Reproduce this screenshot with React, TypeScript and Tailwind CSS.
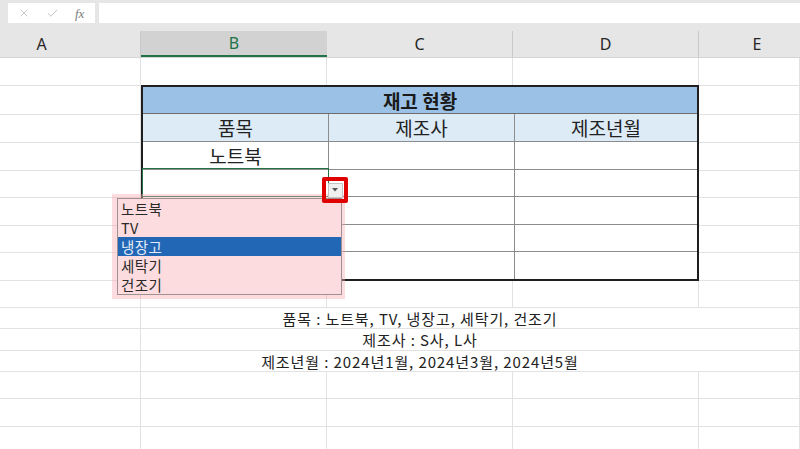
import { X, Check } from 'lucide-react';

const KR = "font-['Noto_Sans_CJK_KR','Noto_Sans',sans-serif]";

const ITEMS = ['노트북', 'TV', '냉장고', '세탁기', '건조기'];

/* plain grid cell with light gridlines */
function Cell({ className = '' }: { className?: string }) {
  return <div className={`border-r border-b border-[#e2e2e2] ${className}`} />;
}

function FormulaBar() {
  return (
    <div className="h-[31px] bg-[#e6e6e6] flex items-start pt-[3px] pl-[8px] gap-[4px]">
      <div className="w-[87px] h-[20px] bg-white flex items-center pl-[10px] gap-[16px]">
        <X size={12} strokeWidth={1.5} className="text-[#b4b4b4]" />
        <Check size={13} strokeWidth={1.5} className="text-[#b4b4b4]" />
        <span className="font-['Liberation_Serif',serif] italic text-[13px] text-[#7a7a7a] leading-none">
          fx
        </span>
      </div>
      <div className="flex-1 h-[20px] bg-white" />
    </div>
  );
}

function ColumnHeaders() {
  const base = 'border-r border-[#c9c9c9] flex items-center justify-center text-[#262626]';
  const letter = "font-['Noto_Sans',sans-serif] text-[16px] leading-none";
  return (
    <div className="h-[27px] bg-[#e6e6e6] grid grid-cols-[141px_186px_186px_186px_101px] border-b border-[#d4d4d4]">
      <div className={`${base} pr-[57px]`}>
        <span className={letter}>A</span>
      </div>
      <div className="bg-[#d2d2d2] border-b-2 border-[#217346] flex items-center justify-center text-[#217346]">
        <span className={letter}>B</span>
      </div>
      <div className={base}>
        <span className={letter}>C</span>
      </div>
      <div className={base}>
        <span className={letter}>D</span>
      </div>
      <div className={`${base} border-r-0 pl-[15px]`}>
        <span className={letter}>E</span>
      </div>
    </div>
  );
}

function StockTable() {
  const td = 'border-r border-b border-[#8c8c8c] flex items-center justify-center';
  return (
    <div className="col-start-2 col-span-3 row-start-2 row-span-7 border-2 border-[#1f1f1f] grid grid-cols-[186px_186px_1fr] grid-rows-[27px_28px_28px_27px_28px_27px_1fr] -mt-px">
      {/* title row */}
      <div className="col-span-3 bg-[#9bc2e6] border-b border-[#6d6d6d] flex items-center justify-center">
        <span className="text-[19px] font-bold text-[#1a1a1a] leading-none">재고 현황</span>
      </div>
      {/* sub headers */}
      {['품목', '제조사', '제조년월'].map((h, i) => (
        <div key={h} className={`${td} bg-[#ddebf7] ${i === 2 ? 'border-r-0' : ''}`}>
          <span className="text-[19px] text-[#222] leading-none">{h}</span>
        </div>
      ))}
      {/* data rows */}
      {[0, 1, 2, 3, 4].map((r) => (
        <>
          <div key={`b${r}`} className={`${td} ${r === 4 ? 'border-b-0' : ''} ${r === 1 ? 'relative' : ''}`}>
            {r === 0 && <span className="text-[19px] text-[#222] leading-none">노트북</span>}
            {r === 1 && (
              <div className="absolute -left-px -top-[2px] -right-px -bottom-px border-[1.5px] border-[#217346]" />
            )}
          </div>
          <div key={`c${r}`} className={`${td} ${r === 4 ? 'border-b-0' : ''}`} />
          <div key={`d${r}`} className={`${td} border-r-0 ${r === 4 ? 'border-b-0' : ''}`} />
        </>
      ))}
    </div>
  );
}

function Notes() {
  const lines = [
    '품목 : 노트북, TV, 냉장고, 세탁기, 건조기',
    '제조사 : S사, L사',
    '제조년월 : 2024년1월, 2024년3월, 2024년5월',
  ];
  const starts = ['row-start-10', 'row-start-11', 'row-start-12'];
  return (
    <>
      {lines.map((t, i) => (
        <div
          key={t}
          className={`${starts[i]} col-start-2 col-span-3 border-b border-[#e2e2e2] flex items-center justify-center`}
        >
          <span className="text-[15px] tracking-[0.9px] text-[#222] whitespace-nowrap leading-[17px]">{t}</span>
        </div>
      ))}
    </>
  );
}

function DropdownList() {
  return (
    <>
      {/* pink highlight behind the list */}
      <div className="absolute left-[112px] top-[194px] w-[233px] h-[105px] bg-[#f7a8b0]/40" />
      <div className="absolute left-[117px] top-[198px] w-[225px] h-[97px] border border-[#a0908f] bg-[#fcdcde] flex flex-col">
        {ITEMS.map((it, i) => (
          <div
            key={it}
            className={`h-[19px] flex items-center pl-[3px] text-[14.5px] tracking-[0.4px] leading-[17px] ${
              i === 2 ? 'bg-[#2267b6] text-[#e4ecf8]' : 'text-[#2a2a2a]'
            }`}
          >
            {it}
          </div>
        ))}
      </div>
      {/* arrow button with red marker */}
      <div className="absolute left-[322px] top-[177px] w-[26px] h-[26px] border-4 border-[#e00000] rounded-[2px] flex items-center justify-center">
        <div className="w-[15px] h-[15px] bg-[#f0f0f0] border border-[#c4c4c4] flex items-center justify-center">
          <svg width="6" height="4" viewBox="0 0 6 4">
            <path d="M0 0 L6 0 L3 3.5 Z" fill="#555" />
          </svg>
        </div>
      </div>
    </>
  );
}

export default function App() {
  const rowStarts = [
    'row-start-1', 'row-start-2', 'row-start-3', 'row-start-4', 'row-start-5',
    'row-start-6', 'row-start-7', 'row-start-8', 'row-start-9', 'row-start-10',
    'row-start-11', 'row-start-12', 'row-start-13', 'row-start-14', 'row-start-15',
  ];
  const colStarts = ['col-start-1', 'col-start-2', 'col-start-3', 'col-start-4', 'col-start-5'];
  const full = [0, 8, 12, 13, 14];
  const sideOnly = [1, 2, 3, 4, 5, 6, 7, 9, 10, 11];

  return (
    <div className={`relative w-[800px] h-[449px] overflow-hidden bg-white ${KR}`}>
      <FormulaBar />
      <ColumnHeaders />
      <div className="grid grid-cols-[141px_186px_186px_186px_101px] grid-rows-[28px_29px_28px_28px_27px_28px_27px_28px_27px_21px_22px_21px_27px_28px_28px]">
        {full.map((r) =>
          colStarts.map((c) => <Cell key={`${r}-${c}`} className={`${rowStarts[r]} ${c}`} />)
        )}
        {sideOnly.map((r) => (
          <>
            <Cell key={`a${r}`} className={`${rowStarts[r]} col-start-1`} />
            <Cell key={`e${r}`} className={`${rowStarts[r]} col-start-5`} />
          </>
        ))}
        <StockTable />
        <Notes />
      </div>
      <DropdownList />
    </div>
  );
}
